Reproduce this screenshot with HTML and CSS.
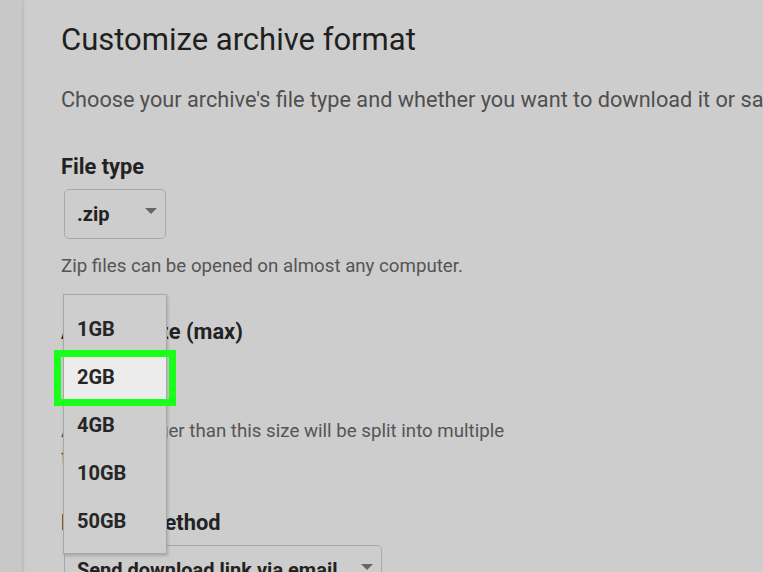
FILE: index.html
```html
<!DOCTYPE html>
<html>
<head>
<meta charset="utf-8">
<link rel="stylesheet" href="styles.css">
</head>
<body>
<div class="page">
  <div class="rail"></div>
  <main class="content">
    <h1 class="title">Customize archive format</h1>
    <p class="subtitle">Choose your archive's file type and whether you want to download it or save it to your storage</p>

    <section class="field">
      <div class="label">File type</div>
      <div class="select select-short"><span class="select-value">.zip</span><span class="arrow"></span></div>
      <p class="help">Zip files can be opened on almost any computer.</p>
    </section>

    <section class="field">
      <div class="label">Archive size (max)</div>
      <div class="select select-short"><span class="select-value">2GB</span><span class="arrow"></span></div>
      <p class="help">Archives larger than this size will be split into multiple files.</p>
    </section>

    <section class="field">
      <div class="label">Delivery method</div>
      <div class="select select-long"><span class="select-value">Send download link via email</span><span class="arrow"></span></div>
    </section>
  </main>

  <ul class="menu">
    <li class="menu-item">1GB</li>
    <li class="menu-item is-active">2GB<span class="focus-ring"></span></li>
    <li class="menu-item">4GB</li>
    <li class="menu-item">10GB</li>
    <li class="menu-item">50GB</li>
  </ul>
</div>
</body>
</html>
```

FILE: styles.css
```css
html, body {
  margin: 0;
  padding: 0;
  height: 100%;
  overflow: hidden;
  background: #cdcdcd;
  font-family: Roboto, "Liberation Sans", sans-serif;
}

.page {
  position: relative;
  display: flex;
  height: 572px;
  width: 763px;
  overflow: hidden;
}

.rail {
  flex: 0 0 22px;
  background: #c8c8c8;
  border-right: 1px solid #bcbcbc;
  box-shadow: 1px 0 2px rgba(0, 0, 0, 0.08);
}

.content {
  flex: 1;
  min-width: 0;
  padding: 22px 0 0 38px;
}

.title {
  margin: 0;
  font-size: 31px;
  font-weight: 400;
  line-height: 36px;
  color: #1f1f1f;
  white-space: nowrap;
}

.subtitle {
  margin: 28px 0 0;
  font-size: 21.7px;
  line-height: 28px;
  color: #4f4f4f;
  white-space: nowrap;
}

.field {
  margin-top: 39px;
}

.label {
  font-size: 21.8px;
  font-weight: 700;
  line-height: 28px;
  color: #222;
}

.select {
  box-sizing: border-box;
  margin: 8px 0 0 3px;
  height: 50px;
  border: 1px solid #a9a9a9;
  border-radius: 5px;
  display: flex;
  align-items: center;
  justify-content: space-between;
  padding: 0 8px 0 12px;
}

.select-short { width: 102px; }
.select-long { width: 318px; }

.select-value {
  font-size: 20px;
  font-weight: 700;
  color: #222;
}

.arrow {
  width: 0;
  height: 0;
  border-left: 6px solid transparent;
  border-right: 6px solid transparent;
  border-top: 6px solid #666;
  margin-top: -6px;
}

.help {
  margin: 14px 0 0;
  max-width: 460px;
  font-size: 18.7px;
  line-height: 26px;
  color: #555;
}

.menu {
  position: absolute;
  left: 63px;
  top: 294px;
  width: 102px;
  margin: 0;
  padding: 10px 0 8px;
  list-style: none;
  background: #cecece;
  border: 1px solid #a8a8a8;
  box-shadow: 1px 2px 3px rgba(0, 0, 0, 0.18);
}

.menu-item {
  position: relative;
  height: 48px;
  display: flex;
  align-items: center;
  padding-left: 13px;
  font-size: 20px;
  font-weight: 700;
  color: #262626;
}

.menu-item.is-active {
  background: #ececec;
}

.focus-ring {
  position: absolute;
  left: -10px;
  right: -10px;
  top: -3px;
  bottom: -5px;
  border: 7px solid #19ff19;
}
```
